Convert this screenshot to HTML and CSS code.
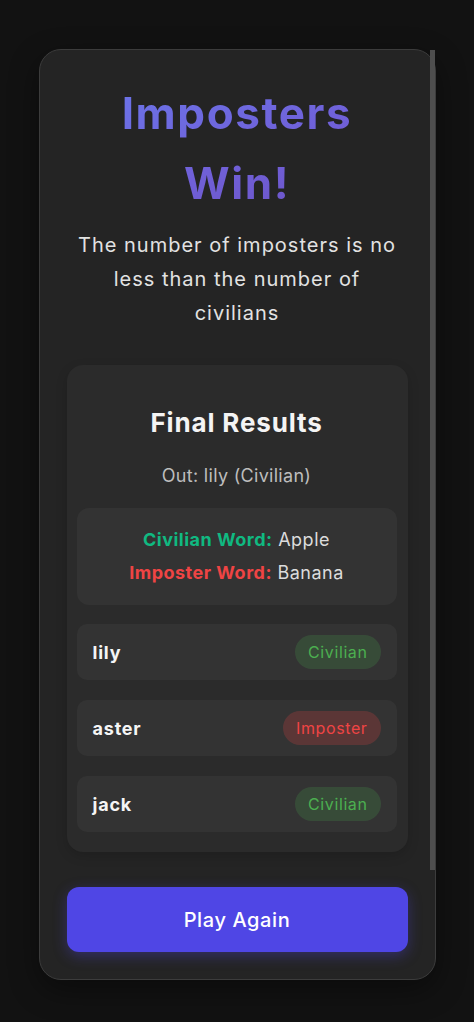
FILE: index.html
```html
<!DOCTYPE html>
<html lang="en">
<head>
<meta charset="utf-8">
<title>Imposters Win!</title>
<link rel="stylesheet" href="styles.css">
</head>
<body>
<main class="page">
  <section class="card">
    <div class="scroll-thumb"></div>
    <h1 class="title">Imposters Win!</h1>
    <p class="subtitle">The number of imposters is no less than the number of civilians</p>
    <div class="results">
      <h2 class="results-title">Final Results</h2>
      <p class="out">Out: lily (Civilian)</p>
      <div class="words">
        <div class="word-line"><span class="label civ">Civilian Word:</span> Apple</div>
        <div class="word-line"><span class="label imp">Imposter Word:</span> Banana</div>
      </div>
      <ul class="players">
        <li class="player"><span class="name">lily</span><span class="badge badge-civ">Civilian</span></li>
        <li class="player"><span class="name">aster</span><span class="badge badge-imp">Imposter</span></li>
        <li class="player"><span class="name">jack</span><span class="badge badge-civ">Civilian</span></li>
      </ul>
    </div>
    <button class="play">Play Again</button>
  </section>
</main>
</body>
</html>
```

FILE: styles.css
```css
* { box-sizing: border-box; }
html, body { margin: 0; padding: 0; }
body {
  background: #121212;
  font-family: Inter, "Noto Sans", "DejaVu Sans", sans-serif;
  color: #f2f2f2;
  width: 474px;
  height: 1022px;
  overflow: hidden;
}
.page {
  padding-top: 49px;
}
.card {
  position: relative;
  width: 397px;
  margin: 0 auto;
  background: #242424;
  border: 1px solid #3c3c3c;
  border-radius: 22px;
  padding: 28px 27px 27px 27px;
  box-shadow: 0 10px 30px rgba(0,0,0,0.4);
}
.scroll-thumb {
  position: absolute;
  top: 0;
  right: 0;
  width: 5px;
  height: 820px;
  background: #4e4e4e;
}
.title {
  margin: 0;
  text-align: center;
  font-size: 44px;
  font-weight: 700;
  line-height: 70px;
  letter-spacing: 1.6px;
  background: linear-gradient(160deg, #6a78ec 0%, #7060d8 55%, #6b4fc0 100%);
  -webkit-background-clip: text;
  background-clip: text;
  color: transparent;
  padding: 0 40px;
}
.subtitle {
  margin: 10px 0 0;
  text-align: center;
  font-size: 20px;
  line-height: 34px;
  letter-spacing: 1px;
  color: #e2e2e2;
  padding: 0 6px;
}
.results {
  margin-top: 35px;
  background: #2b2b2b;
  border-radius: 16px;
  padding: 20px 11px 20px 10px;
  box-shadow: 0 4px 12px rgba(0,0,0,0.15);
}
.results-title {
  margin: 18px 0 0;
  text-align: center;
  font-size: 26px;
  line-height: 39px;
  font-weight: 700;
  letter-spacing: 0.85px;
  color: #f4f4f4;
}
.out {
  margin: 20px 0 0;
  text-align: center;
  font-size: 18px;
  line-height: 27px;
  letter-spacing: 0.3px;
  color: #bdbdbd;
}
.words {
  margin-top: 19px;
  background: #333333;
  border-radius: 12px;
  padding: 15px 10px 16px;
  text-align: center;
  font-size: 18px;
  line-height: 33px;
  letter-spacing: 0.5px;
  color: #dcdcdc;
}
.label { font-weight: 700; }
.label.civ { color: #10b981; }
.label.imp { color: #ef4444; }
.players {
  list-style: none;
  margin: 19px 0 0;
  padding: 0;
  display: flex;
  flex-direction: column;
  gap: 20px;
}
.player {
  height: 56px;
  background: #333333;
  border-radius: 10px;
  display: flex;
  align-items: center;
  justify-content: space-between;
  padding: 0 16px;
}
.name {
  font-size: 18px;
  font-weight: 700;
  letter-spacing: 0.8px;
  color: #f5f5f5;
}
.badge {
  font-size: 16px;
  line-height: 22px;
  letter-spacing: 0.6px;
  padding: 6px 13px;
  border-radius: 17px;
}
.badge-civ {
  background: rgba(76, 175, 80, 0.2);
  color: #4caf50;
}
.badge-imp {
  background: rgba(239, 68, 68, 0.22);
  color: #ef4444;
}
.play {
  display: block;
  width: 100%;
  margin-top: 35px;
  height: 65px;
  border: none;
  border-radius: 12px;
  background: #4f46e5;
  color: #ffffff;
  font-family: inherit;
  font-size: 20px;
  font-weight: 500;
  letter-spacing: 0.6px;
  box-shadow: 0 4px 14px rgba(79, 70, 229, 0.35);
  cursor: pointer;
}
```
